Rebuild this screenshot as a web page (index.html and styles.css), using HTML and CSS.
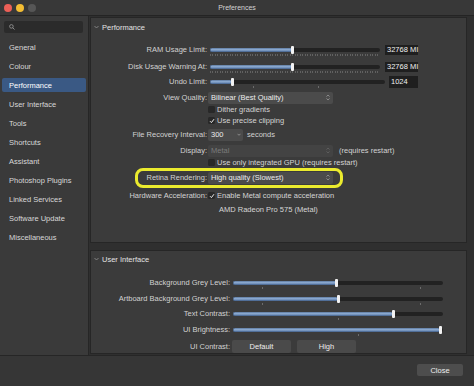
FILE: index.html
```html
<!DOCTYPE html>
<html>
<head>
<meta charset="utf-8">
<title>Preferences</title>
<link rel="stylesheet" href="styles.css">
</head>
<body>
<div class="window">
  <header class="titlebar">
    <div class="lights"><span class="light red"></span><span class="light yellow"></span><span class="light grey"></span></div>
    <div class="title">Preferences</div>
  </header>
  <div class="content">
    <aside class="sidebar">
      <div class="search"><svg width="6" height="6" viewBox="0 0 6 6"><circle cx="2.4" cy="2.4" r="1.8" fill="none" stroke="#9a9a9a" stroke-width="0.8"/><line x1="3.7" y1="3.7" x2="5.5" y2="5.5" stroke="#9a9a9a" stroke-width="0.9"/></svg></div>
      <ul class="nav">
        <li>General</li>
        <li>Colour</li>
        <li class="active">Performance</li>
        <li>User Interface</li>
        <li>Tools</li>
        <li>Shortcuts</li>
        <li>Assistant</li>
        <li>Photoshop Plugins</li>
        <li>Linked Services</li>
        <li>Software Update</li>
        <li>Miscellaneous</li>
      </ul>
    </aside>
    <main class="main">
      <section class="panel perf">
        <div class="panel-head"><svg width="5" height="4" viewBox="0 0 5 4"><polyline points="0.5,1 2.5,3 4.5,1" fill="none" stroke="#8a8a8a" stroke-width="0.9"/></svg><span>Performance</span></div>

        <div class="row r-ram">
          <span class="label">RAM Usage Limit:</span>
          <div class="ctrl">
            <div class="slider"><div class="fill" style="width:48.8%"></div><div class="dots"></div><div class="thumb" style="left:48.8%"></div></div>
            <div class="value">32768 MI</div>
          </div>
        </div>
        <div class="row r-disk">
          <span class="label">Disk Usage Warning At:</span>
          <div class="ctrl">
            <div class="slider"><div class="fill" style="width:48.8%"></div><div class="dots"></div><div class="thumb" style="left:48.8%"></div></div>
            <div class="value">32768 MI</div>
          </div>
        </div>
        <div class="row r-undo">
          <span class="label">Undo Limit:</span>
          <div class="ctrl">
            <div class="slider long"><div class="fill" style="width:12.6%"></div><div class="tick" style="left:24.6%"></div><div class="tick" style="left:61.7%"></div><div class="thumb" style="left:12.6%"></div></div>
            <div class="value undo">1024</div>
          </div>
        </div>
        <div class="row r-view">
          <span class="label">View Quality:</span>
          <div class="ctrl">
            <div class="select"><span>Bilinear (Best Quality)</span><svg class="updown" width="4" height="7" viewBox="0 0 4 7"><polyline points="0.5,2.6 2,1 3.5,2.6" fill="none" stroke="#9c9c9c" stroke-width="0.8"/><polyline points="0.5,4.4 2,6 3.5,4.4" fill="none" stroke="#9c9c9c" stroke-width="0.8"/></svg></div>
          </div>
        </div>
        <div class="row r-dither">
          <span class="label"></span>
          <div class="ctrl check"><span class="box"></span><span>Dither gradients</span></div>
        </div>
        <div class="row r-clip">
          <span class="label"></span>
          <div class="ctrl check"><span class="box"><svg width="6" height="6" viewBox="0 0 6 6"><polyline points="1,3.2 2.4,4.6 5,1.2" fill="none" stroke="#eeeeee" stroke-width="1"/></svg></span><span>Use precise clipping</span></div>
        </div>
        <div class="row r-file">
          <span class="label">File Recovery Interval:</span>
          <div class="ctrl">
            <div class="select short"><span>300</span><svg width="4" height="3" viewBox="0 0 4 3"><polyline points="0.5,0.8 2,2.3 3.5,0.8" fill="none" stroke="#9c9c9c" stroke-width="0.8"/></svg></div>
            <span class="after">seconds</span>
          </div>
        </div>
        <div class="row r-display">
          <span class="label">Display:</span>
          <div class="ctrl">
            <div class="select disabled"><span>Metal</span><svg class="updown" width="4" height="7" viewBox="0 0 4 7"><polyline points="0.5,2.6 2,1 3.5,2.6" fill="none" stroke="#666" stroke-width="0.8"/><polyline points="0.5,4.4 2,6 3.5,4.4" fill="none" stroke="#666" stroke-width="0.8"/></svg></div>
            <span class="after wide">(requires restart)</span>
          </div>
        </div>
        <div class="row r-gpu">
          <span class="label"></span>
          <div class="ctrl check"><span class="box"></span><span>Use only integrated GPU (requires restart)</span></div>
        </div>
        <div class="row r-retina">
          <span class="label">Retina Rendering:</span>
          <div class="ctrl">
            <div class="select"><span>High quality (Slowest)</span><svg class="updown" width="4" height="7" viewBox="0 0 4 7"><polyline points="0.5,2.6 2,1 3.5,2.6" fill="none" stroke="#9c9c9c" stroke-width="0.8"/><polyline points="0.5,4.4 2,6 3.5,4.4" fill="none" stroke="#9c9c9c" stroke-width="0.8"/></svg></div>
          </div>
          <div class="highlight"></div>
        </div>
        <div class="row r-hw">
          <span class="label">Hardware Acceleration:</span>
          <div class="ctrl check"><span class="box"><svg width="6" height="6" viewBox="0 0 6 6"><polyline points="1,3.2 2.4,4.6 5,1.2" fill="none" stroke="#eeeeee" stroke-width="1"/></svg></span><span>Enable Metal compute acceleration</span></div>
        </div>
        <div class="row r-amd">
          <span class="label"></span>
          <div class="ctrl"><span class="gpu-name">AMD Radeon Pro 575 (Metal)</span></div>
        </div>
      </section>

      <section class="panel ui">
        <div class="panel-head small"><svg width="5" height="4" viewBox="0 0 5 4"><polyline points="0.5,1 2.5,3 4.5,1" fill="none" stroke="#8a8a8a" stroke-width="0.9"/></svg><span>User Interface</span></div>
        <div class="row r-bg">
          <span class="label">Background Grey Level:</span>
          <div class="ctrl"><div class="slider wide"><div class="fill" style="width:49.5%"></div><div class="tick" style="left:14%"></div><div class="tick" style="left:89%"></div><div class="thumb" style="left:49.5%"></div></div></div>
        </div>
        <div class="row r-art">
          <span class="label">Artboard Background Grey Level:</span>
          <div class="ctrl"><div class="slider wide"><div class="fill" style="width:50%"></div><div class="tick" style="left:14%"></div><div class="tick" style="left:89%"></div><div class="thumb" style="left:50%"></div></div></div>
        </div>
        <div class="row r-text">
          <span class="label">Text Contrast:</span>
          <div class="ctrl"><div class="slider wide"><div class="fill" style="width:76.2%"></div><div class="tick" style="left:50%"></div><div class="thumb" style="left:76.2%"></div></div></div>
        </div>
        <div class="row r-bright">
          <span class="label">UI Brightness:</span>
          <div class="ctrl"><div class="slider wide"><div class="fill" style="width:98.6%"></div><div class="tick" style="left:59.5%"></div><div class="thumb" style="left:98.6%"></div></div></div>
        </div>
        <div class="row r-contrast">
          <span class="label">UI Contrast:</span>
          <div class="ctrl buttons"><button class="btn seg">Default</button><button class="btn seg">High</button></div>
        </div>
      </section>
    </main>
  </div>
  <footer class="footer"><button class="btn close">Close</button></footer>
</div>
</body>
</html>
```

FILE: styles.css
```css
* { box-sizing: border-box; }

body {
  margin: 0;
  background: #2e2e2e;
  font-family: "Liberation Sans", Arial, sans-serif;
  font-size: 7.5px;
  color: #d4d4d4;
}

.window {
  width: 474px;
  height: 386px;
  display: flex;
  flex-direction: column;
  overflow: hidden;
}

.titlebar {
  height: 16px;
  flex: none;
  display: grid;
  grid-template-columns: 1fr auto 1fr;
  align-items: center;
  background: #383838;
  border-bottom: 1px solid #242424;
}

.lights { display: flex; gap: 4px; padding-left: 4px; }
.light { width: 8px; height: 8px; border-radius: 50%; }
.light.red { background: #ec5f57; }
.light.yellow { background: #f3bd33; }
.light.grey { background: #565656; }

.title { font-size: 7px; color: #d2d2d2; }

.content { flex: 1; display: flex; min-height: 0; }

.sidebar {
  width: 89px;
  flex: none;
  background: #3a3a3a;
  border-right: 1px solid #262626;
  padding-top: 5px;
}

.search {
  margin-left: 4px;
  width: 79px;
  height: 12px;
  background: #2b2b2b;
  border-radius: 2px;
  display: flex;
  align-items: center;
  padding-left: 5px;
}

.nav {
  list-style: none;
  margin: 7px 0 0;
  padding: 0;
  display: flex;
  flex-direction: column;
  gap: 5px;
}

.nav li {
  height: 14px;
  width: 84px;
  margin-left: 2px;
  padding-left: 7px;
  display: flex;
  align-items: center;
  border-radius: 2px;
  color: #d8d8d8;
}

.nav li.active { background: #3a5984; color: #ffffff; }

.main {
  flex: 1;
  display: flex;
  flex-direction: column;
  gap: 7px;
  padding: 1px 7px 1px 1px;
  background: #2f2f2f;
}

.panel {
  background: #3b3b3b;
  border: 1px solid #262626;
}

.perf { height: 226px; flex: none; }
.ui { flex: 1; }

.panel-head {
  height: 18px;
  display: flex;
  align-items: center;
  gap: 3px;
  padding-left: 3px;
  color: #e2e2e2;
}
.panel-head.small { height: 16px; }

.row {
  position: relative;
  display: flex;
  align-items: center;
  height: 11px;
}

.label {
  width: 116px;
  flex: none;
  text-align: right;
  white-space: nowrap;
  color: #d2d2d2;
}

.ctrl {
  display: flex;
  align-items: center;
  margin-left: 1px;
  white-space: nowrap;
}

.ui .label { width: 139px; }
.ui .ctrl { margin-left: 2px; }

/* row spacing */
.r-ram { margin-top: 8px; }
.r-disk { margin-top: 6px; }
.r-undo { margin-top: 4px; }
.r-view { margin-top: 5px; }
.r-dither { margin-top: 1px; }
.r-clip { margin-top: 0; }
.r-file { margin-top: 3px; }
.r-display { margin-top: 5px; }
.r-gpu { margin-top: 1px; }
.r-retina { margin-top: 4px; }
.r-hw { margin-top: 7px; }
.r-amd { margin-top: 3px; }

.r-bg { margin-top: 10px; }
.r-art { margin-top: 5px; }
.r-text { margin-top: 4px; }
.r-bright { margin-top: 5px; }
.r-contrast { margin-top: 5px; height: 13px; }

/* sliders */
.slider {
  position: relative;
  width: 170px;
  height: 4px;
  margin-left: 2px;
  background: #222222;
  border-radius: 2px;
}
.slider.long { width: 175px; }
.slider.wide { width: 210px; margin-left: 1px; }

.slider .fill {
  height: 100%;
  border-radius: 2px;
  background: linear-gradient(#a4c1e4, #5b7ba8);
  box-shadow: inset 0 0 0 0.5px #3e5a82;
}

.slider .thumb {
  position: absolute;
  top: -2px;
  width: 3px;
  height: 8px;
  margin-left: -1.5px;
  background: #f2f2f2;
  border-radius: 1px;
}

.slider .dots {
  position: absolute;
  left: 0;
  right: 0;
  top: 6px;
  height: 2px;
  background: repeating-linear-gradient(90deg, #616161 0 1px, transparent 1px 2.5px);
}

.slider .tick {
  position: absolute;
  top: 6px;
  width: 1px;
  height: 2px;
  background: #6c6c6c;
}

.value {
  margin-left: 5px;
  width: 33px;
  height: 10px;
  line-height: 10px;
  padding-left: 2px;
  background: #1f1f1f;
  color: #f0f0f0;
  white-space: nowrap;
}
.value.undo { margin-left: 4px; width: 29px; height: 12px; line-height: 12px; }

/* selects */
.select {
  width: 125px;
  height: 12px;
  display: flex;
  align-items: center;
  justify-content: space-between;
  padding: 0 3px;
  background: #4b4b4b;
  border-radius: 2px;
  color: #ececec;
}
.select.short { width: 35px; padding-right: 2px; }
.select.disabled { background: #434343; color: #7b7b7b; }

.after { margin-left: 4px; color: #d2d2d2; }
.after.wide { margin-left: 6px; }

/* checkboxes */
.check { gap: 2px; }
.box {
  width: 7px;
  height: 7px;
  background: #282828;
  border-radius: 1.5px;
  display: flex;
  align-items: center;
  justify-content: center;
}

.gpu-name { margin-left: 11px; color: #d6d6d6; }

.highlight {
  position: absolute;
  left: 44px;
  top: -4px;
  width: 208px;
  height: 20px;
  border: 3px solid #ebeb2e;
  border-radius: 8px;
  pointer-events: none;
}

/* buttons */
.btn {
  font: inherit;
  border: 0;
  padding: 0;
  border-radius: 2px;
  background: #4a4a4a;
  color: #eeeeee;
}
.buttons { gap: 6px; }
.btn.seg { width: 59px; height: 13px; }

.footer {
  height: 31px;
  flex: none;
  border-top: 1px solid #262626;
  background: #363636;
  display: flex;
  justify-content: flex-end;
  align-items: flex-start;
  padding: 8px 11px 0 0;
}

.btn.close { width: 46px; height: 12px; background: #4d4d4d; }
```
